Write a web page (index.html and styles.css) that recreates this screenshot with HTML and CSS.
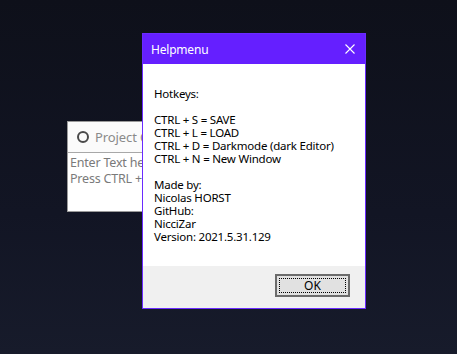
FILE: index.html
```html
<html>
<head>
<title>Helpmenu</title>
<link rel="stylesheet" href="styles.css">
</head>
<body>

<div id="desktop">

  <div id="editor" class="window">
    <div class="editor-title">
      <span class="ring"></span>
      <span class="editor-name">Project C</span>
    </div>
    <div class="editor-text">Enter Text here<br>Press CTRL + H</div>
  </div>

  <div id="helpmenu" class="window">
    <div class="titlebar">
      <span class="title">Helpmenu</span>
      <svg class="close" width="10" height="10" viewBox="0 0 10 10">
        <path d="M0.5 0.5 L9.5 9.5 M9.5 0.5 L0.5 9.5" stroke="#fff" stroke-width="1.1" fill="none"/>
      </svg>
    </div>
    <div class="content">
      Hotkeys:<br>
      <br>
      CTRL + S = SAVE<br>
      CTRL + L = LOAD<br>
      CTRL + D = Darkmode (dark Editor)<br>
      CTRL + N = New Window<br>
      <br>
      Made by:<br>
      Nicolas HORST<br>
      GitHub:<br>
      NicciZar<br>
      Version: 2021.5.31.129
    </div>
    <div class="footer">
      <button class="ok"><span class="focus">OK</span></button>
    </div>
  </div>

</div>

</body>
</html>
```

FILE: styles.css
```css
body { margin:0; background:#10121d; font-family:"Noto Sans", "Open Sans", sans-serif; font-size:12px; }
#desktop { position:relative; width:457px; height:354px; overflow:hidden; background:linear-gradient(180deg, #0e101a 0%, #121524 60%, #171b2b 100%); }
.window { position:absolute; box-sizing:border-box; }

/* editor window behind the dialog */
#editor { left:67px; top:121px; width:110px; height:91px; background:#fbfbfb; border:1px solid #9a9a9a; display:flex; flex-direction:column; }
.editor-title { height:30px; display:flex; align-items:center; padding-left:9px; gap:6px; color:#8a8a8a; font-size:13px; letter-spacing:-0.1px; }
.ring { width:12px; height:12px; border:2px solid #4a4a4a; border-radius:50%; box-sizing:border-box; }
.editor-text { flex:1; background:#fff; border-top:1px solid #a8a8a8; color:#7a7a7a; padding:2px 2px; line-height:16px; font-size:12.5px; letter-spacing:-0.2px; white-space:nowrap; overflow:hidden; }

/* help dialog */
#helpmenu { left:142px; top:33px; width:224px; height:276px; border:1px solid #6a2bff; background:#fff; display:flex; flex-direction:column; }
.titlebar { height:30px; background:#651fff; color:#fff; display:flex; align-items:center; justify-content:space-between; padding:0 10px 0 8px; }
.title { font-size:12px; letter-spacing:-0.2px; }
.close { display:block; }
.content { flex:1; padding:23px 0 0 11px; line-height:13px; color:#000; font-size:11.5px; letter-spacing:-0.22px; }
.footer { height:42px; background:#f0f0f0; display:flex; justify-content:flex-end; align-items:flex-start; padding:8px 15px 0 0; box-sizing:border-box; }
.ok { width:75px; height:23px; padding:2px; background:#e1e1e1; border:2px solid #6b6b6b; box-sizing:border-box; font:inherit; font-size:12px; color:#000; }
.focus { display:flex; height:100%; align-items:center; justify-content:center; border:1px dotted #000; box-sizing:border-box; }
```
